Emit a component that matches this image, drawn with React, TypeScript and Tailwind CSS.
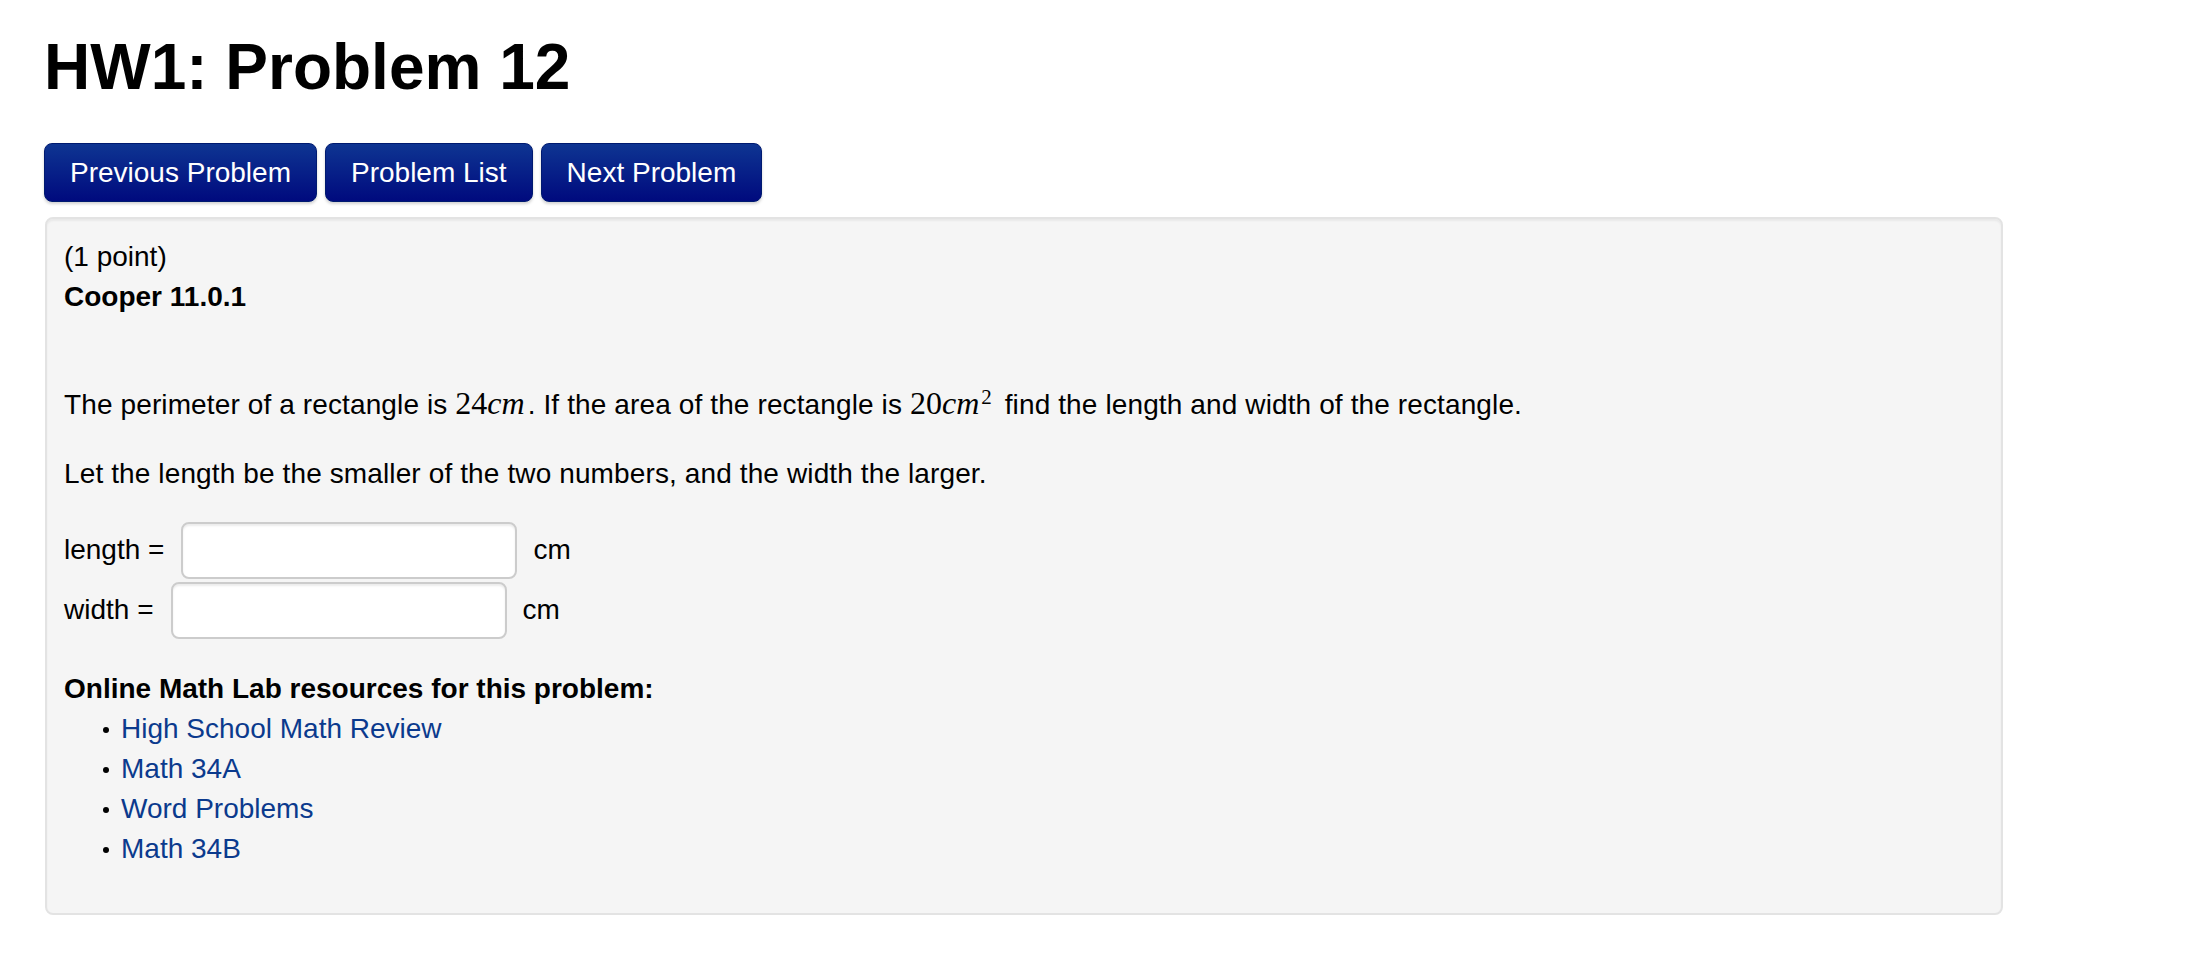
import React from "react";

function MathA() {
  return (
    <span className="font-['Liberation_Serif','Times_New_Roman',serif] text-[32px] leading-[0] pr-[3px] tracking-normal">
      24<span className="italic">cm</span>
    </span>
  );
}

function MathB() {
  return (
    <span className="font-['Liberation_Serif','Times_New_Roman',serif] text-[32px] leading-[0] pr-[5px] tracking-normal">
      20<span className="italic">cm</span>
      <span className="relative -top-[10px] ml-[2px] text-[21px]">2</span>
    </span>
  );
}

function Bullet({ children }: { children: React.ReactNode }) {
  return (
    <li className="flex pl-[39px]">
      <span className="w-[18px]">
        <span className="relative -top-[1px] inline-block h-[6px] w-[6px] rounded-full bg-black align-middle" />
      </span>
      <a href="#" className="text-[#0b3a8d]">
        {children}
      </a>
    </li>
  );
}

export default function App() {
  const buttons = ["Previous Problem", "Problem List", "Next Problem"];
  return (
    <div className="min-h-screen bg-white pl-[44px] pt-[31px] font-['Liberation_Sans',Arial,Helvetica,sans-serif] text-black">
      <h1 className="text-[64px] font-bold leading-[72px]">HW1: Problem 12</h1>

      <div className="mt-[40px] flex gap-[8px]">
        {buttons.map((t) => (
          <button
            key={t}
            className="h-[59px] rounded-[8px] border border-[#001a70] bg-[linear-gradient(to_bottom,#0e3592,#000a7e)] px-[25px] text-[28px] leading-[40px] text-white shadow-[0_2px_3px_rgba(0,0,0,0.18)]"
          >
            {t}
          </button>
        ))}
      </div>

      <div className="ml-[1px] mt-[15px] w-[1958px] rounded-[8px] border-2 border-[#e3e3e3] bg-[#f5f5f5] pb-[44px] pl-[17px] pt-[18px] text-[28px] leading-[40px] shadow-[inset_0_2px_2px_rgba(0,0,0,0.05)]">
        <div>(1 point)</div>
        <div className="font-bold">Cooper 11.0.1</div>

        <p className="mt-[68px] tracking-[0.12px]">
          The perimeter of a rectangle is <MathA />. If the area of the rectangle is <MathB /> find the
          length and width of the rectangle.
        </p>
        <p className="mt-[29px] tracking-[0.12px]">
          Let the length be the smaller of the two numbers, and the width the larger.
        </p>

        <div className="mt-[28px] flex h-[57px] items-center">
          <span className="relative -top-[1px] mr-[17px]">length =</span>
          <input
            type="text"
            className="h-[57px] w-[336px] rounded-[8px] border-2 border-[#cccccc] bg-white shadow-[inset_0_2px_2px_rgba(0,0,0,0.075)] outline-none"
          />
          <span className="relative -top-[1px] ml-[16px]">cm</span>
        </div>
        <div className="mt-[3px] flex h-[57px] items-center">
          <span className="relative -top-[1px] mr-[17px]">width =</span>
          <input
            type="text"
            className="h-[57px] w-[336px] rounded-[8px] border-2 border-[#cccccc] bg-white shadow-[inset_0_2px_2px_rgba(0,0,0,0.075)] outline-none"
          />
          <span className="relative -top-[1px] ml-[16px]">cm</span>
        </div>

        <div className="mt-[30px] font-bold">Online Math Lab resources for this problem:</div>
        <ul>
          <Bullet>High School Math Review</Bullet>
          <Bullet>Math 34A</Bullet>
          <Bullet>Word Problems</Bullet>
          <Bullet>Math 34B</Bullet>
        </ul>
      </div>
    </div>
  );
}
